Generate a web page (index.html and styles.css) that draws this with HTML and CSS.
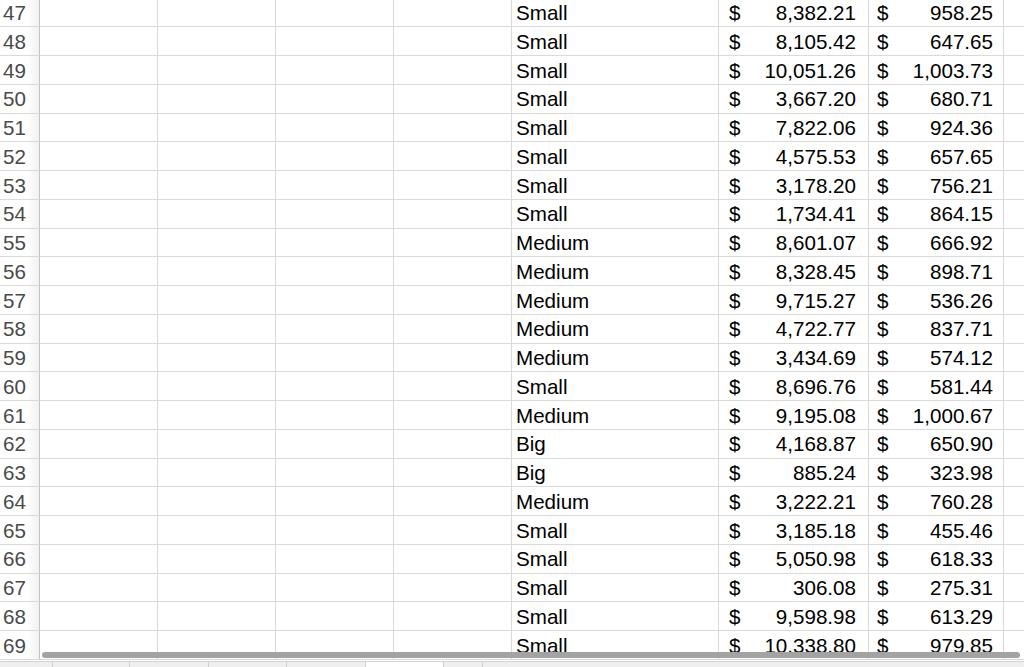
FILE: index.html
```html
<!DOCTYPE html>
<html>
<head>
<meta charset="utf-8">
<link rel="stylesheet" href="styles.css">
</head>
<body>
<div class="sheet">
  <div class="grid">
    <div class="row"><div class="cell rh">47</div><div class="cell"></div><div class="cell"></div><div class="cell"></div><div class="cell"></div><div class="cell txt">Small</div><div class="cell acc f"><span>$</span><span>8,382.21</span></div><div class="cell acc g"><span>$</span><span>958.25</span></div><div class="cell last"></div></div>
    <div class="row"><div class="cell rh">48</div><div class="cell"></div><div class="cell"></div><div class="cell"></div><div class="cell"></div><div class="cell txt">Small</div><div class="cell acc f"><span>$</span><span>8,105.42</span></div><div class="cell acc g"><span>$</span><span>647.65</span></div><div class="cell last"></div></div>
    <div class="row"><div class="cell rh">49</div><div class="cell"></div><div class="cell"></div><div class="cell"></div><div class="cell"></div><div class="cell txt">Small</div><div class="cell acc f"><span>$</span><span>10,051.26</span></div><div class="cell acc g"><span>$</span><span>1,003.73</span></div><div class="cell last"></div></div>
    <div class="row"><div class="cell rh">50</div><div class="cell"></div><div class="cell"></div><div class="cell"></div><div class="cell"></div><div class="cell txt">Small</div><div class="cell acc f"><span>$</span><span>3,667.20</span></div><div class="cell acc g"><span>$</span><span>680.71</span></div><div class="cell last"></div></div>
    <div class="row"><div class="cell rh">51</div><div class="cell"></div><div class="cell"></div><div class="cell"></div><div class="cell"></div><div class="cell txt">Small</div><div class="cell acc f"><span>$</span><span>7,822.06</span></div><div class="cell acc g"><span>$</span><span>924.36</span></div><div class="cell last"></div></div>
    <div class="row"><div class="cell rh">52</div><div class="cell"></div><div class="cell"></div><div class="cell"></div><div class="cell"></div><div class="cell txt">Small</div><div class="cell acc f"><span>$</span><span>4,575.53</span></div><div class="cell acc g"><span>$</span><span>657.65</span></div><div class="cell last"></div></div>
    <div class="row"><div class="cell rh">53</div><div class="cell"></div><div class="cell"></div><div class="cell"></div><div class="cell"></div><div class="cell txt">Small</div><div class="cell acc f"><span>$</span><span>3,178.20</span></div><div class="cell acc g"><span>$</span><span>756.21</span></div><div class="cell last"></div></div>
    <div class="row"><div class="cell rh">54</div><div class="cell"></div><div class="cell"></div><div class="cell"></div><div class="cell"></div><div class="cell txt">Small</div><div class="cell acc f"><span>$</span><span>1,734.41</span></div><div class="cell acc g"><span>$</span><span>864.15</span></div><div class="cell last"></div></div>
    <div class="row"><div class="cell rh">55</div><div class="cell"></div><div class="cell"></div><div class="cell"></div><div class="cell"></div><div class="cell txt">Medium</div><div class="cell acc f"><span>$</span><span>8,601.07</span></div><div class="cell acc g"><span>$</span><span>666.92</span></div><div class="cell last"></div></div>
    <div class="row"><div class="cell rh">56</div><div class="cell"></div><div class="cell"></div><div class="cell"></div><div class="cell"></div><div class="cell txt">Medium</div><div class="cell acc f"><span>$</span><span>8,328.45</span></div><div class="cell acc g"><span>$</span><span>898.71</span></div><div class="cell last"></div></div>
    <div class="row"><div class="cell rh">57</div><div class="cell"></div><div class="cell"></div><div class="cell"></div><div class="cell"></div><div class="cell txt">Medium</div><div class="cell acc f"><span>$</span><span>9,715.27</span></div><div class="cell acc g"><span>$</span><span>536.26</span></div><div class="cell last"></div></div>
    <div class="row"><div class="cell rh">58</div><div class="cell"></div><div class="cell"></div><div class="cell"></div><div class="cell"></div><div class="cell txt">Medium</div><div class="cell acc f"><span>$</span><span>4,722.77</span></div><div class="cell acc g"><span>$</span><span>837.71</span></div><div class="cell last"></div></div>
    <div class="row"><div class="cell rh">59</div><div class="cell"></div><div class="cell"></div><div class="cell"></div><div class="cell"></div><div class="cell txt">Medium</div><div class="cell acc f"><span>$</span><span>3,434.69</span></div><div class="cell acc g"><span>$</span><span>574.12</span></div><div class="cell last"></div></div>
    <div class="row"><div class="cell rh">60</div><div class="cell"></div><div class="cell"></div><div class="cell"></div><div class="cell"></div><div class="cell txt">Small</div><div class="cell acc f"><span>$</span><span>8,696.76</span></div><div class="cell acc g"><span>$</span><span>581.44</span></div><div class="cell last"></div></div>
    <div class="row"><div class="cell rh">61</div><div class="cell"></div><div class="cell"></div><div class="cell"></div><div class="cell"></div><div class="cell txt">Medium</div><div class="cell acc f"><span>$</span><span>9,195.08</span></div><div class="cell acc g"><span>$</span><span>1,000.67</span></div><div class="cell last"></div></div>
    <div class="row"><div class="cell rh">62</div><div class="cell"></div><div class="cell"></div><div class="cell"></div><div class="cell"></div><div class="cell txt">Big</div><div class="cell acc f"><span>$</span><span>4,168.87</span></div><div class="cell acc g"><span>$</span><span>650.90</span></div><div class="cell last"></div></div>
    <div class="row"><div class="cell rh">63</div><div class="cell"></div><div class="cell"></div><div class="cell"></div><div class="cell"></div><div class="cell txt">Big</div><div class="cell acc f"><span>$</span><span>885.24</span></div><div class="cell acc g"><span>$</span><span>323.98</span></div><div class="cell last"></div></div>
    <div class="row"><div class="cell rh">64</div><div class="cell"></div><div class="cell"></div><div class="cell"></div><div class="cell"></div><div class="cell txt">Medium</div><div class="cell acc f"><span>$</span><span>3,222.21</span></div><div class="cell acc g"><span>$</span><span>760.28</span></div><div class="cell last"></div></div>
    <div class="row"><div class="cell rh">65</div><div class="cell"></div><div class="cell"></div><div class="cell"></div><div class="cell"></div><div class="cell txt">Small</div><div class="cell acc f"><span>$</span><span>3,185.18</span></div><div class="cell acc g"><span>$</span><span>455.46</span></div><div class="cell last"></div></div>
    <div class="row"><div class="cell rh">66</div><div class="cell"></div><div class="cell"></div><div class="cell"></div><div class="cell"></div><div class="cell txt">Small</div><div class="cell acc f"><span>$</span><span>5,050.98</span></div><div class="cell acc g"><span>$</span><span>618.33</span></div><div class="cell last"></div></div>
    <div class="row"><div class="cell rh">67</div><div class="cell"></div><div class="cell"></div><div class="cell"></div><div class="cell"></div><div class="cell txt">Small</div><div class="cell acc f"><span>$</span><span>306.08</span></div><div class="cell acc g"><span>$</span><span>275.31</span></div><div class="cell last"></div></div>
    <div class="row"><div class="cell rh">68</div><div class="cell"></div><div class="cell"></div><div class="cell"></div><div class="cell"></div><div class="cell txt">Small</div><div class="cell acc f"><span>$</span><span>9,598.98</span></div><div class="cell acc g"><span>$</span><span>613.29</span></div><div class="cell last"></div></div>
    <div class="row"><div class="cell rh">69</div><div class="cell"></div><div class="cell"></div><div class="cell"></div><div class="cell"></div><div class="cell txt">Small</div><div class="cell acc f"><span>$</span><span>10,338.80</span></div><div class="cell acc g"><span>$</span><span>979.85</span></div><div class="cell last"></div></div>
  </div>
  <div class="hscroll"></div>
</div>
<div class="tabs">
  <div class="tab t1"></div>
  <div class="tab t2"></div>
  <div class="tab t3"></div>
  <div class="tab t4"></div>
  <div class="tab t5"></div>
  <div class="tab active"></div>
  <div class="tab t7"></div>
  <div class="tab rest"></div>
</div>
</body>
</html>
```

FILE: styles.css
```css
html, body {
  margin: 0;
  padding: 0;
  background: #ffffff;
  overflow: hidden;
  width: 1024px;
  height: 667px;
}
body {
  font-family: "Liberation Sans", Arial, Helvetica, sans-serif;
  color: #000;
}
.sheet {
  position: relative;
  height: 661px;
  overflow: hidden;
}
.grid {
  margin-top: -1.3px;
}
.row {
  display: grid;
  grid-template-columns: 40px 118px 118px 118px 118px 207px 150px 135px 1fr;
  height: 28.75px;
}
.cell {
  box-sizing: border-box;
  border-right: 1px solid #dadada;
  border-bottom: 1px solid #dadada;
  font-size: 20.6px;
  line-height: 28.75px;
  padding-top: 0.5px;
  white-space: nowrap;
  overflow: hidden;
}
.rh {
  color: #4a4a4a;
  padding-left: 3px;
  border-right-color: #c4c4c4;
  background: linear-gradient(to right, #ffffff 70%, #f1f1f1 100%);
}
.txt {
  padding-left: 4px;
}
.acc {
  display: flex;
  justify-content: space-between;
}
.acc.f {
  padding-left: 10px;
  padding-right: 12px;
}
.acc.g {
  padding-left: 8px;
  padding-right: 10px;
}
.last {
  border-right: none;
}
.hscroll {
  position: absolute;
  left: 42px;
  right: 4px;
  top: 652px;
  height: 6px;
  border-radius: 3px;
  background: #a3a3a3;
}
.tabs {
  display: flex;
  height: 6px;
  border-top: 1px solid #d4d4d4;
  background: #f0f0f0;
}
.tab {
  box-sizing: border-box;
  border-right: 1px solid #cfcfcf;
  background: #efefef;
}
.t1 { width: 53px; }
.t2 { width: 77px; }
.t3 { width: 79px; }
.t4 { width: 78px; }
.t5 { width: 79px; }
.active { width: 78px; background: #ffffff; }
.t7 { width: 39px; }
.rest { flex: 1; border-right: none; }
```
